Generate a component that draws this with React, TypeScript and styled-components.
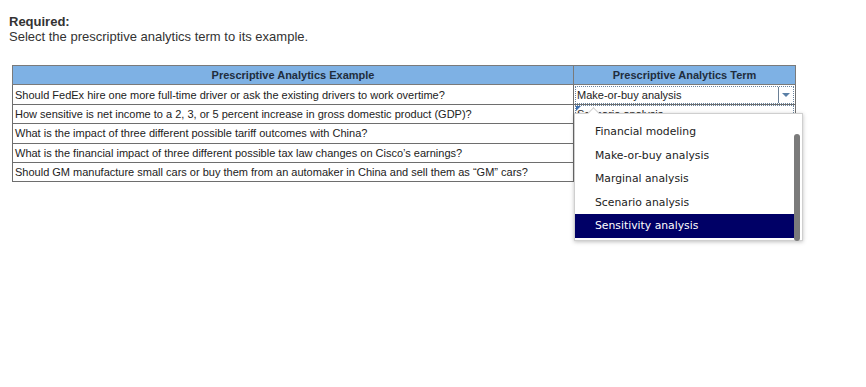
import React from "react";
import styled, { createGlobalStyle } from "styled-components";

const GlobalStyle = createGlobalStyle`
  html, body, #root {
    height: 100%;
  }
  body {
    margin: 0;
    background: #ffffff;
  }
`;

const Page = styled.div`
  box-sizing: border-box;
  min-height: 100%;
  padding: 14px 9px 0 9px;
  font-family: "Liberation Sans", Arial, sans-serif;
  color: #333333;
`;

const Title = styled.div`
  font-size: 13px;
  font-weight: bold;
  line-height: 15px;
`;

const Instruction = styled.div`
  font-size: 13px;
  line-height: 15px;
`;

const TableWrap = styled.div`
  position: relative;
  margin: 21px 0 0 3px;
  width: 783px;
`;

const Table = styled.table`
  border-collapse: collapse;
  width: 781px;
  table-layout: fixed;
  font-size: 11px;
  color: #222222;
`;

const HeadCell = styled.th<{ $width: number }>`
  width: ${(p) => p.$width}px;
  height: 18.4px;
  padding: 0;
  background: #7eb1e4;
  border: 1px solid #7a7a7a;
  font-weight: bold;
  text-align: center;
  color: #1f2d3d;
`;

const Cell = styled.td`
  height: 18.4px;
  padding: 0 0 0 2px;
  border: 1px solid #6e6e6e;
  white-space: nowrap;
  overflow: hidden;
`;

const SelectCell = styled.td`
  height: 18.4px;
  padding: 0;
  border: 1px solid #6e6e6e;
`;

const SelectBox = styled.div`
  display: flex;
  align-items: center;
  height: 18px;
  border: 1px dotted #6a849e;
  box-sizing: border-box;
  margin: 0 1px;
  position: relative;
`;

const SelectText = styled.span`
  flex: 1;
  padding-left: 1px;
  white-space: nowrap;
  overflow: hidden;
`;

const ArrowBox = styled.span`
  width: 14px;
  height: 16px;
  border-left: 1px solid #6a7f95;
  display: flex;
  align-items: center;
  justify-content: center;
`;

const Arrow = styled.span`
  width: 0;
  height: 0;
  border-left: 4px solid transparent;
  border-right: 4px solid transparent;
  border-top: 4px solid #5a7fa6;
`;

const Corner = styled.span`
  position: absolute;
  left: 0;
  top: 0;
  width: 0;
  height: 0;
  border-top: 5px solid #3b6fb0;
  border-right: 5px solid transparent;
`;

const Menu = styled.div`
  position: absolute;
  left: 562px;
  top: 48px;
  width: 229px;
  height: 128px;
  box-sizing: border-box;
  background: #ffffff;
  border: 1px solid #cfcfcf;
  box-shadow: 0 1px 4px rgba(0, 0, 0, 0.25);
  padding-top: 6px;
  z-index: 2;
  font-family: "DejaVu Sans", Verdana, sans-serif;
  font-size: 10.8px;
  color: #222222;

  &::before {
    content: "";
    position: absolute;
    left: 14px;
    top: -5px;
    width: 8px;
    height: 8px;
    background: #ffffff;
    border-left: 1px solid #cfcfcf;
    border-top: 1px solid #cfcfcf;
    transform: rotate(45deg);
  }
`;

const MenuItem = styled.div<{ $selected?: boolean }>`
  height: 23.5px;
  line-height: 23.5px;
  padding-left: 20px;
  margin-right: 8px;
  background: ${(p) => (p.$selected ? "#000066" : "transparent")};
  color: ${(p) => (p.$selected ? "#ffffff" : "#222222")};
  position: relative;
`;

const Thumb = styled.div`
  position: absolute;
  right: 2px;
  top: 20px;
  width: 6px;
  height: 107px;
  border-radius: 3px;
  background: #7b7b7b;
`;

const examples = [
  "Should FedEx hire one more full-time driver or ask the existing drivers to work overtime?",
  "How sensitive is net income to a 2, 3, or 5 percent increase in gross domestic product (GDP)?",
  "What is the impact of three different possible tariff outcomes with China?",
  "What is the financial impact of three different possible tax law changes on Cisco\u2019s earnings?",
  "Should GM manufacture small cars or buy them from an automaker in China and sell them as \u201cGM\u201d cars?",
];

const options = [
  "Financial modeling",
  "Make-or-buy analysis",
  "Marginal analysis",
  "Scenario analysis",
  "Sensitivity analysis",
];

export default function App() {
  return (
    <Page>
      <GlobalStyle />
      <Title>Required:</Title>
      <Instruction>Select the prescriptive analytics term to its example.</Instruction>
      <TableWrap>
        <Table>
          <thead>
            <tr>
              <HeadCell $width={560}>Prescriptive Analytics Example</HeadCell>
              <HeadCell $width={221}>Prescriptive Analytics Term</HeadCell>
            </tr>
          </thead>
          <tbody>
            {examples.map((ex, i) => (
              <tr key={i}>
                <Cell>{ex}</Cell>
                {i === 0 ? (
                  <SelectCell>
                    <SelectBox>
                      <SelectText>Make-or-buy analysis</SelectText>
                      <ArrowBox>
                        <Arrow />
                      </ArrowBox>
                    </SelectBox>
                  </SelectCell>
                ) : i === 1 ? (
                  <SelectCell>
                    <SelectBox>
                      <Corner />
                      <SelectText>Scenario analysis</SelectText>
                    </SelectBox>
                  </SelectCell>
                ) : (
                  <SelectCell />
                )}
              </tr>
            ))}
          </tbody>
        </Table>
        <Menu>
          {options.map((o) => (
            <MenuItem key={o} $selected={o === "Sensitivity analysis"}>
              {o}
            </MenuItem>
          ))}
          <Thumb />
        </Menu>
      </TableWrap>
    </Page>
  );
}
